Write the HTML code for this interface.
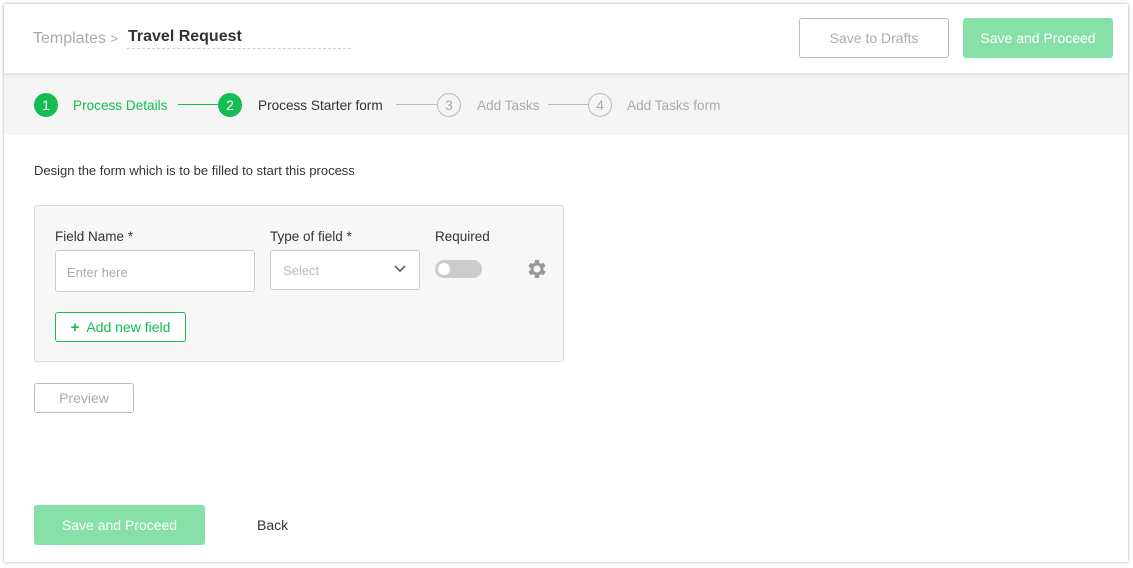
<!DOCTYPE html>
<html><head><meta charset="utf-8"><style>
*{box-sizing:border-box;margin:0;padding:0}
body{width:1133px;height:568px;background:#fff;font-family:"Liberation Sans",sans-serif;position:relative;overflow:hidden}
.card{position:absolute;left:4px;top:4px;width:1124px;height:558px;background:#fff;box-shadow:0 0 3px rgba(0,0,0,.35)}
.abs{position:absolute}
.hdr{left:0;top:0;width:1124px;height:69px;background:#fff;box-shadow:0 2px 3px rgba(0,0,0,.08);z-index:2}
.steps{left:0;top:69px;width:1124px;height:62px;background:#f5f5f5}
.circ{width:24px;height:24px;border-radius:50%;text-align:center;line-height:24px;font-size:14px}
.g{background:#13bd52;color:#fff}
.o{border:1px solid #bbb;color:#aaa;line-height:22px}
.st{font-size:13.6px;top:25px}
.line{height:1px;top:31px}
.btn{border-radius:3px;text-align:center;font-size:14px}
.lbl{font-size:13.5px;color:#333;top:23px}
</style></head><body>
<div class="card">
 <div class="abs hdr">
  <div class="abs" style="left:29px;top:26px;font-size:16px;color:#aaa">Templates <span style="font-size:13px">&gt;</span></div>
  <div class="abs" style="left:123px;top:24px;width:224px;height:21px;border-bottom:1px dashed #ccc"></div>
  <div class="abs" style="left:124px;top:24px;font-size:16px;font-weight:bold;color:#333">Travel Request</div>
  <div class="abs btn" style="left:795px;top:14px;width:150px;height:40px;border:1px solid #bbb;color:#aaa;line-height:38px">Save to Drafts</div>
  <div class="abs btn" style="left:959px;top:14px;width:150px;height:40px;background:#86e0a8;color:#fff;line-height:40px">Save and Proceed</div>
 </div>
 <div class="abs steps">
  <div class="abs circ g" style="left:30px;top:20px">1</div>
  <div class="abs st" style="left:69px;color:#13bd52">Process Details</div>
  <div class="abs line" style="left:174px;width:40px;background:#13bd52"></div>
  <div class="abs circ g" style="left:214px;top:20px">2</div>
  <div class="abs st" style="left:254px;color:#333">Process Starter form</div>
  <div class="abs line" style="left:392px;width:41px;background:#bbb"></div>
  <div class="abs circ o" style="left:433px;top:20px">3</div>
  <div class="abs st" style="left:473px;color:#aaa">Add Tasks</div>
  <div class="abs line" style="left:544px;width:40px;background:#bbb"></div>
  <div class="abs circ o" style="left:584px;top:20px">4</div>
  <div class="abs st" style="left:623px;color:#aaa">Add Tasks form</div>
 </div>
 <div class="abs" style="left:30px;top:159px;font-size:13px;color:#333">Design the form which is to be filled to start this process</div>
 <div class="abs" style="left:30px;top:201px;width:530px;height:157px;background:#f7f7f7;border:1px solid #ddd;border-radius:3px">
  <div class="abs lbl" style="left:20px">Field Name *</div>
  <div class="abs lbl" style="left:235px">Type of field *</div>
  <div class="abs lbl" style="left:400px">Required</div>
  <div class="abs" style="left:20px;top:44px;width:200px;height:42px;background:#fff;border:1px solid #ccc;border-radius:3px;font-size:13px;color:#aaa;padding:14px 0 0 11px">Enter here</div>
  <div class="abs" style="left:235px;top:44px;width:150px;height:40px;background:#fff;border:1px solid #ccc;border-radius:3px;font-size:13px;color:#bbb;padding:12px 0 0 12px">Select
   <svg class="abs" style="left:122px;top:13px" width="14" height="10" viewBox="0 0 14 10"><path d="M2 2l5 5 5-5" fill="none" stroke="#666" stroke-width="1.8"/></svg></div>
  <div class="abs" style="left:400px;top:54px;width:47px;height:18px;border-radius:9px;background:#ccc"><div class="abs" style="left:3px;top:3px;width:12px;height:12px;border-radius:50%;background:#fff"></div></div>
  <svg class="abs" style="left:489px;top:51px" width="24" height="24" viewBox="0 0 24 24"><path fill="#999" d="M19.4 13a7.5 7.5 0 000-2l2.1-1.6-2-3.5-2.5 1a7.3 7.3 0 00-1.7-1L15 3h-4l-.4 2.9a7.3 7.3 0 00-1.7 1l-2.5-1-2 3.5L6.6 11a7.5 7.5 0 000 2l-2.1 1.6 2 3.5 2.5-1a7.3 7.3 0 001.7 1L11 21h4l.4-2.9a7.3 7.3 0 001.7-1l2.5 1 2-3.5zM13 15.5a3.5 3.5 0 110-7 3.5 3.5 0 010 7z"/></svg>
  <div class="abs btn" style="left:20px;top:106px;width:131px;height:30px;border:1px solid #13bd52;color:#13bd52;line-height:28px;background:#fff"><b style="font-size:15px">+</b>&nbsp; Add new field</div>
 </div>
 <div class="abs btn" style="left:30px;top:379px;width:100px;height:30px;border:1px solid #bbb;color:#aaa;line-height:28px">Preview</div>
 <div class="abs btn" style="left:30px;top:501px;width:171px;height:40px;background:#86e0a8;color:#fff;line-height:40px">Save and Proceed</div>
 <div class="abs" style="left:253px;top:513px;font-size:14px;color:#333">Back</div>
</div>
</body></html>
